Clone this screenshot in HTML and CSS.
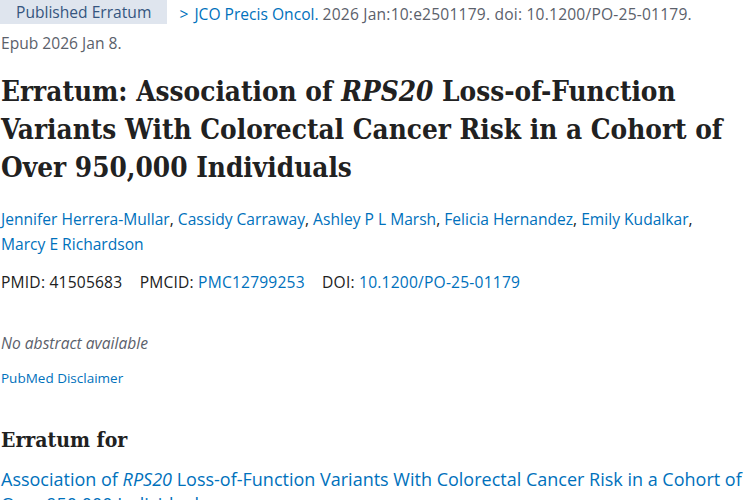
FILE: index.html
```html
<!DOCTYPE html>
<html>
<head>
<meta charset="utf-8">
<link rel="stylesheet" href="styles.css">
</head>
<body>
<div class="page">
  <div class="cit">
    <span class="badge">Published Erratum</span>
    <a class="journal" href="#"><span class="chev">&gt;</span> JCO Precis Oncol.</a>
    <span class="meta">2026 Jan:10:e2501179. doi: 10.1200/PO-25-01179.</span>
    <span class="epub">Epub 2026 Jan 8.</span>
  </div>
  <h1 class="title">Erratum: Association of <i>RPS20</i> Loss-of-Function Variants With Colorectal Cancer Risk in a Cohort of Over 950,000 Individuals</h1>
  <div class="authors">
    <a href="#">Jennifer Herrera-Mullar</a>, <a href="#">Cassidy Carraway</a>, <a href="#">Ashley P L Marsh</a>, <a href="#">Felicia Hernandez</a>, <a href="#">Emily Kudalkar</a>, <a href="#">Marcy E Richardson</a>
  </div>
  <div class="ids">
    <span class="id">PMID: 41505683</span>
    <span class="id">PMCID: <a href="#">PMC12799253</a></span>
    <span class="id">DOI: <a href="#">10.1200/PO-25-01179</a></span>
  </div>
  <p class="noabs">No abstract available</p>
  <a class="disc" href="#">PubMed Disclaimer</a>
  <h2 class="sub">Erratum for</h2>
  <a class="for" href="#">Association of <i>RPS20</i> Loss-of-Function Variants With Colorectal Cancer Risk in a Cohort of Over 950,000 Individuals.</a>
</div>
</body>
</html>
```

FILE: styles.css
```css
html, body { margin: 0; padding: 0; background: #fff; }
body { font-family: "Open Sans", "Noto Sans", sans-serif; color: #212121; }
a { color: #0071bc; text-decoration: none; }
.page { padding: 0 0 0 1px; width: 745px; }
.cit { font-size: 15.6px; line-height: 28px; color: #5b616b; }
.badge { display: inline-block; background: #dfe5ee; color: #35557f; padding: 0 16px; line-height: 24px; margin-left: -1px; margin-right: 8px; vertical-align: top; }
.chev { display: inline-block; margin-right: 2px; }
.meta { letter-spacing: 0.2px; }
.epub { display: block; line-height: 30px; }
.title { font-family: "DejaVu Serif Condensed", "DejaVu Serif", serif; font-stretch: condensed; font-weight: bold; font-size: 27.7px; line-height: 38px; margin: 15px 0 0; color: #212121; }
.authors { font-size: 15.6px; line-height: 25px; margin-top: 20px; }
.authors a { white-space: nowrap; }
.ids { font-size: 15.6px; line-height: 25px; margin-top: 13px; letter-spacing: 0.2px; }
.id { margin-right: 13px; }
.noabs { font-style: italic; color: #5b616b; font-size: 15.6px; line-height: 25px; margin: 36px 0 0; }
.disc { display: block; font-size: 13.5px; line-height: 20px; margin-top: 12px; }
.sub { font-family: "DejaVu Serif Condensed", "DejaVu Serif", serif; font-stretch: condensed; font-weight: bold; font-size: 21px; line-height: 30px; margin: 37px 0 0; }
.for { display: block; font-size: 18px; line-height: 25px; margin-top: 12px; }
```
